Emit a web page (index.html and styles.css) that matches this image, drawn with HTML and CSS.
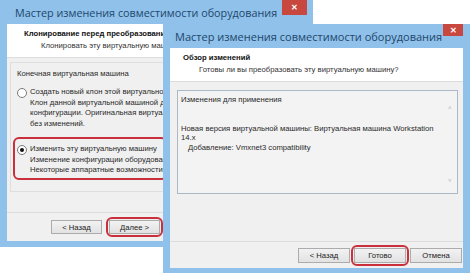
FILE: index.html
```html
<!DOCTYPE html>
<html lang="ru">
<head>
    <meta charset="UTF-8">
    <title>Мастер изменения совместимости оборудования</title>
    <link rel="stylesheet" href="styles.css">
</head>
<body>
    <div class="desktop">
        <!-- back window: clone step -->
        <div class="window win-back">
            <div class="titlebar">
                <span class="title">Мастер изменения совместимости оборудования</span>
                <span class="close">&#x2715;</span>
            </div>
            <div class="client">
                <div class="head">
                    <div class="head-title">Клонирование перед преобразованием</div>
                    <div class="head-sub">Клонировать эту виртуальную машину?</div>
                </div>
                <div class="body">
                    <div class="group">
                        <div class="group-label">Конечная виртуальная машина</div>
                        <div class="option">
                            <span class="radio"></span>
                            <div class="option-text">
                                <div>Создать новый клон этой виртуальной машины</div>
                                <div>Клон данной виртуальной машиной для новой</div>
                                <div>конфигурации. Оригинальная виртуальная машина</div>
                                <div>без изменений.</div>
                            </div>
                        </div>
                        <div class="option picked">
                            <span class="radio on"></span>
                            <div class="option-text">
                                <div>Изменить эту виртуальную машину</div>
                                <div>Изменение конфигурации оборудования</div>
                                <div>Некоторые аппаратные возможности</div>
                            </div>
                        </div>
                    </div>
                </div>
                <div class="footer">
                    <button class="btn">&lt; Назад</button>
                    <button class="btn marked">Далее &gt;</button>
                </div>
            </div>
        </div>

        <!-- front window: summary step -->
        <div class="window win-front">
            <div class="titlebar">
                <span class="title">Мастер изменения совместимости оборудования</span>
                <span class="close">&#x2715;</span>
            </div>
            <div class="client">
                <div class="head">
                    <div class="head-title">Обзор изменений</div>
                    <div class="head-sub">Готовы ли вы преобразовать эту виртуальную машину?</div>
                </div>
                <div class="body">
                    <div class="listbox">
                        <div class="list-text">
                            <div>Изменения для применения</div>
                            <div class="gap"></div>
                            <div>Новая версия виртуальной машины: Виртуальная машина Workstation</div>
                            <div>14.x</div>
                            <div class="indent">Добавление: Vmxnet3 compatibility</div>
                        </div>
                        <div class="scroll">
                            <span>&#x2038;</span>
                            <span class="down">&#x2038;</span>
                        </div>
                    </div>
                </div>
                <div class="footer">
                    <button class="btn">&lt; Назад</button>
                    <button class="btn marked">Готово</button>
                    <button class="btn">Отмена</button>
                </div>
            </div>
        </div>
    </div>
</body>
</html>
```

FILE: styles.css
```css
body {
    margin: 0;
    background: #ffffff;
    font-family: "Liberation Sans", Arial, sans-serif;
    color: #1e1e1e;
}

.desktop {
    position: relative;
    width: 474px;
    height: 274px;
    overflow: hidden;
}

.window {
    position: absolute;
    display: flex;
    flex-direction: column;
    background: #8fc1ea;
    box-sizing: border-box;
}

.win-back {
    left: 0;
    top: 0;
    width: 313px;
    height: 247px;
    padding: 0 7px 6px 7px;
}

.win-front {
    left: 163px;
    top: 24px;
    width: 307px;
    height: 249px;
    padding: 0 7px 5px 7px;
}

.titlebar {
    height: 24px;
    display: flex;
    align-items: center;
    position: relative;
}

.title {
    font-family: "Open Sans", "Noto Sans", sans-serif;
    font-size: 10.8px;
    color: #22476b;
    padding-left: 8px;
    white-space: nowrap;
}

.win-front .title {
    font-size: 11px;
    padding-left: 5px;
}

.close {
    position: absolute;
    top: 0;
    right: -1px;
    width: 25px;
    height: 15px;
    background: #c8473f;
    color: #fff;
    font-size: 8px;
    font-weight: bold;
    display: flex;
    align-items: center;
    justify-content: center;
}

.win-front .close {
    width: 20px;
    height: 12px;
    right: 0;
}

.client {
    flex: 1;
    display: flex;
    flex-direction: column;
    background: #f0f0f0;
    overflow: hidden;
}

/* the back window is covered from x=163, so its panes stop there */
.win-back .head,
.win-back .body {
    width: 156px;
    overflow: hidden;
}

.head {
    height: 34px;
    background: #ffffff;
    border-bottom: 1px solid #dcdcdc;
    font-size: 7.7px;
    white-space: nowrap;
    padding: 5px 0 0 17px;
    box-sizing: border-box;
}

.head-title {
    font-weight: bold;
    color: #111;
}

.head-sub {
    padding-left: 17px;
    margin-top: 3px;
    color: #333;
}

.win-front .head {
    padding-left: 13px;
}

.win-front .head-sub {
    padding-left: 16px;
}

.body {
    flex: 1;
    font-size: 7.7px;
    color: #2a2a2a;
    white-space: nowrap;
    box-sizing: border-box;
}

.win-back .body {
    padding: 4px 0 0 3px;
}

.group {
    height: 130px;
    border: 1px solid #dedede;
    border-right: none;
    padding: 6px 0 0 6px;
    box-sizing: border-box;
}

.group-label {
    margin-bottom: 9px;
}

.option {
    display: flex;
    gap: 3px;
    line-height: 10.5px;
}

.option.picked {
    position: relative;
    margin-top: 15px;
}

.option.picked::before {
    content: "";
    position: absolute;
    left: -4px;
    top: -7px;
    width: 150px;
    height: 39px;
    border: 2px solid #c9303b;
    border-radius: 6px;
}

.radio {
    width: 8px;
    height: 8px;
    border: 1px solid #7a7a7a;
    border-radius: 50%;
    background: #fff;
    margin-top: 1px;
    flex: none;
    position: relative;
}

.radio.on::after {
    content: "";
    position: absolute;
    left: 2px;
    top: 2px;
    width: 4px;
    height: 4px;
    border-radius: 50%;
    background: #111;
}

.win-front .body {
    padding: 8px 5px 0 7px;
}

.listbox {
    height: 102px;
    border: 1px solid #abb8c6;
    background: #f3f3f3;
    display: flex;
}

.list-text {
    flex: 1;
    padding: 4px 0 0 3px;
    line-height: 9.5px;
}

.list-text .gap {
    height: 19px;
}

.list-text .indent {
    padding-left: 7px;
}

.scroll {
    width: 14px;
    display: flex;
    flex-direction: column;
    justify-content: space-between;
    align-items: center;
    color: #b5b5b5;
    font-size: 9px;
    padding: 6px 0 2px 0;
}

.scroll .down {
    transform: scaleY(-1);
}

.footer {
    height: 27px;
    border-top: 1px solid #dcdcdc;
    display: flex;
    justify-content: flex-end;
    align-items: center;
    gap: 4px;
    padding-right: 1px;
    box-sizing: border-box;
}

.win-back .footer {
    height: 29px;
    padding-right: 146px;
    gap: 7px;
}

.btn {
    width: 51px;
    height: 14px;
    padding: 0;
    font-family: "Liberation Sans", Arial, sans-serif;
    font-size: 7.7px;
    color: #222;
    background: linear-gradient(#f2f2f2, #e2e2e2);
    border: 1px solid #acacac;
    position: relative;
}

.win-front .btn {
    width: 52px;
    height: 15px;
}

.btn.marked::before {
    content: "";
    position: absolute;
    left: -4px;
    top: -4px;
    right: -4px;
    bottom: -4px;
    border: 2px solid #c9303b;
    border-radius: 6px;
}
```
